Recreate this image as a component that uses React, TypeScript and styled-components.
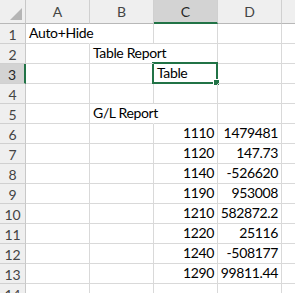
import React from 'react';
import styled, { createGlobalStyle } from 'styled-components';

const GlobalStyle = createGlobalStyle`
  html, body {
    margin: 0;
    padding: 0;
    background: #ffffff;
    overflow: hidden;
  }
`;

const ROW_COUNT = 14;
const COLUMNS = ['A', 'B', 'C', 'D', 'E'];
const SELECTED_COL = 'C';
const SELECTED_ROW = 3;

type CellData = { text: string; align?: 'left' | 'right'; overflow?: boolean };

const cells: Record<string, CellData> = {
  A1: { text: 'Auto+Hide', overflow: true },
  B2: { text: 'Table Report', overflow: true },
  C3: { text: 'Table' },
  B5: { text: 'G/L Report', overflow: true },
  C6: { text: '1110', align: 'right' },
  D6: { text: '1479481', align: 'right' },
  C7: { text: '1120', align: 'right' },
  D7: { text: '147.73', align: 'right' },
  C8: { text: '1140', align: 'right' },
  D8: { text: '-526620', align: 'right' },
  C9: { text: '1190', align: 'right' },
  D9: { text: '953008', align: 'right' },
  C10: { text: '1210', align: 'right' },
  D10: { text: '582872.2', align: 'right' },
  C11: { text: '1220', align: 'right' },
  D11: { text: '25116', align: 'right' },
  C12: { text: '1240', align: 'right' },
  D12: { text: '-508177', align: 'right' },
  C13: { text: '1290', align: 'right' },
  D13: { text: '99811.44', align: 'right' },
};

const Sheet = styled.div`
  display: grid;
  grid-template-columns: 26px repeat(5, 64px);
  grid-template-rows: 24px repeat(${ROW_COUNT}, 20px);
  font-family: Lato, 'Liberation Sans', sans-serif;
  font-size: 14px;
  color: #000000;
  width: 295px;
  height: 293px;
  overflow: hidden;
`;

const Corner = styled.div`
  position: relative;
  background: #efefef;
  border-right: 1px solid #c8c8c8;
  border-bottom: 1px solid #b8b8b8;
  box-sizing: border-box;

  &::after {
    content: '';
    position: absolute;
    right: 3px;
    bottom: 3px;
    width: 0;
    height: 0;
    border-left: 12px solid transparent;
    border-bottom: 12px solid #b5b5b5;
  }
`;

const ColHeader = styled.div<{ $selected?: boolean }>`
  display: flex;
  align-items: center;
  justify-content: center;
  box-sizing: border-box;
  background: ${(p) => (p.$selected ? '#d3d3d3' : '#efefef')};
  border-right: 1px solid #d0d0d0;
  border-bottom: ${(p) => (p.$selected ? '2px solid #217346' : '1px solid #b8b8b8')};
  padding-top: ${(p) => (p.$selected ? '1px' : '0')};
  color: ${(p) => (p.$selected ? '#262626' : '#444444')};
  font-size: 14px;
`;

const RowHeader = styled.div<{ $selected?: boolean }>`
  display: flex;
  align-items: center;
  justify-content: center;
  box-sizing: border-box;
  background: ${(p) => (p.$selected ? '#d3d3d3' : '#efefef')};
  border-right: ${(p) => (p.$selected ? '2px solid #217346' : '1px solid #c8c8c8')};
  border-bottom: 1px solid #d0d0d0;
  color: ${(p) => (p.$selected ? '#262626' : '#444444')};
  font-size: 14px;
  padding-top: 1px;
`;

const Cell = styled.div<{ $align: 'left' | 'right'; $overflow: boolean }>`
  position: relative;
  display: flex;
  align-items: flex-end;
  justify-content: ${(p) => (p.$align === 'right' ? 'flex-end' : 'flex-start')};
  box-sizing: border-box;
  border-right: 1px solid ${(p) => (p.$overflow ? 'transparent' : '#d9d9d9')};
  border-bottom: 1px solid #d9d9d9;
  padding: 0 3px 1px 3px;
  white-space: nowrap;
  overflow: visible;
  z-index: ${(p) => (p.$overflow ? 1 : 0)};
`;

const Selection = styled.div`
  position: absolute;
  left: -2px;
  top: -2px;
  right: -1px;
  bottom: -1px;
  border: 2px solid #217346;
  pointer-events: none;
  z-index: 2;

  &::after {
    content: '';
    position: absolute;
    right: -4px;
    bottom: -4px;
    width: 5px;
    height: 5px;
    background: #217346;
    border: 1px solid #ffffff;
  }
`;

const CellText = styled.span`
  position: relative;
  z-index: 3;
  line-height: 18px;
  letter-spacing: -0.35px;
`;

export default function App() {
  const rows = Array.from({ length: ROW_COUNT }, (_, i) => i + 1);
  return (
    <>
      <GlobalStyle />
      <Sheet>
        <Corner />
        {COLUMNS.map((c) => (
          <ColHeader key={c} $selected={c === SELECTED_COL}>
            {c}
          </ColHeader>
        ))}
        {rows.map((r) => (
          <React.Fragment key={r}>
            <RowHeader $selected={r === SELECTED_ROW}>{r}</RowHeader>
            {COLUMNS.map((c) => {
              const id = `${c}${r}`;
              const data = cells[id];
              const selected = c === SELECTED_COL && r === SELECTED_ROW;
              return (
                <Cell key={id} $align={data?.align ?? 'left'} $overflow={!!data?.overflow}>
                  {data && <CellText>{data.text}</CellText>}
                  {selected && <Selection />}
                </Cell>
              );
            })}
          </React.Fragment>
        ))}
      </Sheet>
    </>
  );
}
